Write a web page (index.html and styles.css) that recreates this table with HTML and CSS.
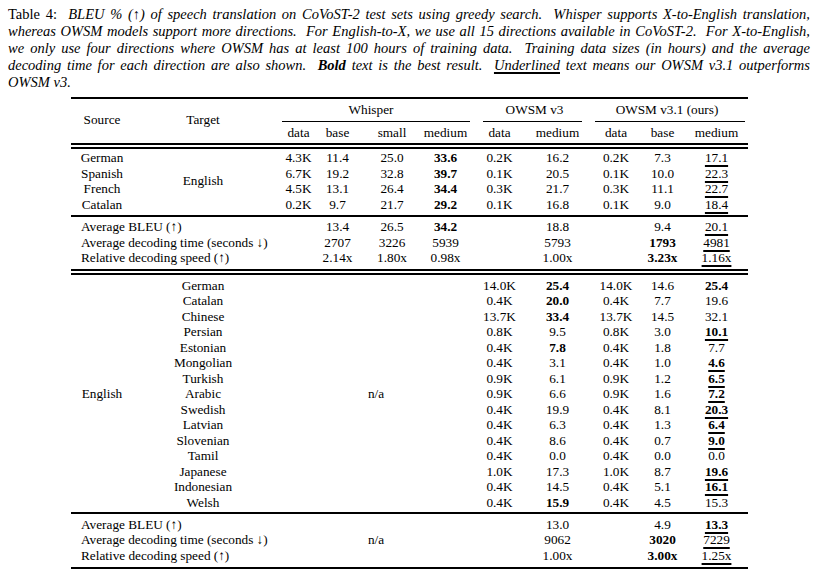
FILE: index.html
```html
<!DOCTYPE html>
<html>
<head>
<meta charset="utf-8">
<link rel="stylesheet" href="styles.css">
</head>
<body>
<div class="caption">
  <div class="ln"><span class="up">Table 4:</span>&nbsp; BLEU % (↑) of speech translation on CoVoST-2 test sets using greedy search.&nbsp; Whisper supports X-to-English translation,</div>
  <div class="ln">whereas OWSM models support more directions.&nbsp; For English-to-X, we use all 15 directions available in CoVoST-2.&nbsp; For X-to-English,</div>
  <div class="ln">we only use four directions where OWSM has at least 100 hours of training data.&nbsp; Training data sizes (in hours) and the average</div>
  <div class="ln">decoding time for each direction are also shown.&nbsp; <b>Bold</b> text is the best result.&nbsp; <u>Underlined</u> text means our OWSM v3.1 outperforms</div>
  <div class="ln last">OWSM v3.</div>
</div>

<div class="tbl">
  <div class="rule"></div>

  <div class="hs">Source</div>
  <div class="hs">Target</div>
  <div class="grp g-wh"><span class="gt-wh">Whisper</span></div>
  <div class="grp g-v3"><span class="gt-v3">OWSM v3</span></div>
  <div class="grp g-v31"><span class="gt-v31">OWSM v3.1 (ours)</span></div>

  <div class="h2">data</div><div class="h2">base</div><div class="h2">small</div><div class="h2">medium</div>
  <div class="h2">data</div><div class="h2">medium</div>
  <div class="h2">data</div><div class="h2">base</div><div class="h2">medium</div>

  <div class="dbl d1"></div>

  <div>German</div><div class="span4">English</div>
  <div>4.3K</div><div>11.4</div><div>25.0</div><div class="b">33.6</div><div>0.2K</div><div>16.2</div><div>0.2K</div><div>7.3</div><div class="u">17.1</div>
  <div>Spanish</div>
  <div>6.7K</div><div>19.2</div><div>32.8</div><div class="b">39.7</div><div>0.1K</div><div>20.5</div><div>0.1K</div><div>10.0</div><div class="u">22.3</div>
  <div>French</div>
  <div>4.5K</div><div>13.1</div><div>26.4</div><div class="b">34.4</div><div>0.3K</div><div>21.7</div><div>0.3K</div><div>11.1</div><div class="u">22.7</div>
  <div>Catalan</div>
  <div>0.2K</div><div>9.7</div><div>21.7</div><div class="b">29.2</div><div>0.1K</div><div>16.8</div><div>0.1K</div><div>9.0</div><div class="u">18.4</div>

  <div class="rule mid1"></div>

  <div class="lbl">Average BLEU (↑)</div>
  <div></div><div>13.4</div><div>26.5</div><div class="b">34.2</div><div></div><div>18.8</div><div></div><div>9.4</div><div class="u">20.1</div>
  <div class="lbl">Average decoding time (seconds ↓)</div>
  <div></div><div>2707</div><div>3226</div><div>5939</div><div></div><div>5793</div><div></div><div class="b">1793</div><div class="u">4981</div>
  <div class="lbl">Relative decoding speed (↑)</div>
  <div></div><div>2.14x</div><div>1.80x</div><div>0.98x</div><div></div><div>1.00x</div><div></div><div class="b">3.23x</div><div class="u">1.16x</div>

  <div class="dbl d2"></div>

  <div class="span15">English</div>
  <div>German</div><div class="na15">n/a</div>
  <div>14.0K</div><div class="b">25.4</div><div>14.0K</div><div>14.6</div><div class="b">25.4</div>
  <div>Catalan</div><div>0.4K</div><div class="b">20.0</div><div>0.4K</div><div>7.7</div><div>19.6</div>
  <div>Chinese</div><div>13.7K</div><div class="b">33.4</div><div>13.7K</div><div>14.5</div><div>32.1</div>
  <div>Persian</div><div>0.8K</div><div>9.5</div><div>0.8K</div><div>3.0</div><div class="b u">10.1</div>
  <div>Estonian</div><div>0.4K</div><div class="b">7.8</div><div>0.4K</div><div>1.8</div><div>7.7</div>
  <div>Mongolian</div><div>0.4K</div><div>3.1</div><div>0.4K</div><div>1.0</div><div class="b u">4.6</div>
  <div>Turkish</div><div>0.9K</div><div>6.1</div><div>0.9K</div><div>1.2</div><div class="b u">6.5</div>
  <div>Arabic</div><div>0.9K</div><div>6.6</div><div>0.9K</div><div>1.6</div><div class="b u">7.2</div>
  <div>Swedish</div><div>0.4K</div><div>19.9</div><div>0.4K</div><div>8.1</div><div class="b u">20.3</div>
  <div>Latvian</div><div>0.4K</div><div>6.3</div><div>0.4K</div><div>1.3</div><div class="b u">6.4</div>
  <div>Slovenian</div><div>0.4K</div><div>8.6</div><div>0.4K</div><div>0.7</div><div class="b u">9.0</div>
  <div>Tamil</div><div>0.4K</div><div>0.0</div><div>0.4K</div><div>0.0</div><div>0.0</div>
  <div>Japanese</div><div>1.0K</div><div>17.3</div><div>1.0K</div><div>8.7</div><div class="b u">19.6</div>
  <div>Indonesian</div><div>0.4K</div><div>14.5</div><div>0.4K</div><div>5.1</div><div class="b u">16.1</div>
  <div>Welsh</div><div>0.4K</div><div class="b">15.9</div><div>0.4K</div><div>4.5</div><div>15.3</div>

  <div class="rule mid2"></div>

  <div class="lbl">Average BLEU (↑)</div>
  <div class="na3">n/a</div>
  <div></div><div>13.0</div><div></div><div>4.9</div><div class="b u">13.3</div>
  <div class="lbl">Average decoding time (seconds ↓)</div>
  <div></div><div>9062</div><div></div><div class="b">3020</div><div class="u">7229</div>
  <div class="lbl">Relative decoding speed (↑)</div>
  <div></div><div>1.00x</div><div></div><div class="b">3.00x</div><div class="u">1.25x</div>

  <div class="rule bot"></div>
</div>
</body>
</html>
```

FILE: styles.css
```css
html, body {
  margin: 0;
  padding: 0;
  background: #fff;
  color: #000;
  font-family: "Liberation Serif", "Times New Roman", serif;
}

.caption {
  width: 802px;
  margin-left: 8px;
  padding-top: 6px;
  font-size: 14.5px;
  line-height: 17px;
  font-style: italic;
}

.caption .ln {
  text-align: justify;
  text-align-last: justify;
}

.caption .ln.last {
  text-align: left;
  text-align-last: left;
}

.caption .up {
  font-style: normal;
}

.caption u {
  text-decoration-thickness: 1.5px;
  text-underline-offset: 2px;
}

.tbl {
  display: grid;
  grid-template-columns: 62px 140px 51px 27px 82px 25px 83px 33px 84px 9px 99px;
  width: 695px;
  margin: 6px 0 0 71px;
  font-size: 13.25px;
  line-height: 15.5px;
}

.tbl > div {
  justify-self: center;
  white-space: nowrap;
}

.tbl > .rule {
  grid-column: 1 / -1;
  justify-self: stretch;
  margin-right: 18px;
  height: 2px;
  background: #000;
}

.tbl > .dbl {
  grid-column: 1 / -1;
  justify-self: stretch;
  margin-right: 18px;
  height: 2px;
  border-top: 2px solid #000;
  border-bottom: 2px solid #000;
}

.tbl > .d1 { margin-top: 3px; margin-bottom: 1px; }
.tbl > .mid1 { margin-top: 3px; margin-bottom: 2px; }
.tbl > .d2 { margin-top: 3px; margin-bottom: 3px; }
.tbl > .mid2 { margin-top: 2px; margin-bottom: 2.5px; }
.tbl > .bot { margin-top: 3.5px; }

.tbl > .hs {
  grid-row: span 2;
  align-self: center;
}

.tbl > .grp {
  justify-self: stretch;
  text-align: center;
  padding: 3px 0 3.5px;
  border-bottom: 1px solid #000;
}

.tbl > .g-wh { grid-column: span 4; margin-left: 9px; margin-right: -12px; padding-right: 10px; }
.tbl > .g-v3 { grid-column: span 2; margin-left: 25px; margin-right: -8px; padding-left: 4px; }
.tbl > .g-v31 { grid-column: span 3; margin-left: 21px; margin-right: 21px; padding-right: 6px; }

.tbl > .h2 {
  padding-top: 2.5px;
}

.tbl > .span4 {
  grid-row: span 4;
  align-self: center;
}

.tbl > .span15 {
  grid-row: span 15;
  align-self: center;
}

.tbl > .na15,
.tbl > .na3 {
  grid-column: span 4;
  justify-self: stretch;
  text-align: center;
  align-self: center;
  margin-left: 9px;
  margin-right: -12px;
}

.tbl > .na15 { grid-row: span 15; }
.tbl > .na3 { grid-row: span 3; }

.tbl > .lbl {
  grid-column: span 2;
  justify-self: start;
  padding-left: 10px;
}

.b {
  font-weight: bold;
}

.u {
  text-decoration: underline;
  text-decoration-thickness: 1.5px;
  text-underline-offset: 2.5px;
}
```
